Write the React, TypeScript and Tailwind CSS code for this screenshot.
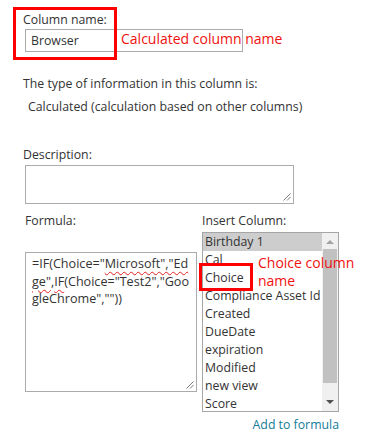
const columns = [
  'Birthday 1',
  'Cal',
  'Choice',
  'Compliance Asset Id',
  'Created',
  'DueDate',
  'expiration',
  'Modified',
  'new view',
  'Score',
];

function Grip() {
  return (
    <svg
      className="absolute right-[2px] bottom-[2px]"
      width="9"
      height="9"
      viewBox="0 0 9 9"
    >
      <path d="M8.5 1.5 L1.5 8.5 M8.5 5 L5 8.5" stroke="#7a7a7a" strokeWidth="1" />
    </svg>
  );
}

const squiggle =
  'underline decoration-wavy decoration-[#e02020] decoration-1 underline-offset-[3px]';

export default function App() {
  return (
    <div
      className="w-[372px] h-[439px] bg-white text-[#333] text-[12.3px] leading-[18px] pl-[23px] pt-[11px]"
      style={{ fontFamily: '"Open Sans", "Noto Sans", sans-serif' }}
    >
      {/* column name */}
      <div className="relative">
        <div>Column name:</div>
        <div className="ml-[2px] w-[218px] h-[23px] border border-[#ababab] pl-[5px] leading-[21px]">
          Browser
        </div>
        <div className="absolute left-[-10px] top-[-4px] w-[104px] h-[53px] border-[3px] border-[#ff0000]" />
        <div className="absolute left-[98px] top-[19px] text-[14px] text-[#f01010] leading-[18px]">
          Calculated column name
        </div>
      </div>

      <div className="mt-[23px]">The type of information in this column is:</div>
      <div className="mt-[5px] ml-[5px]">Calculated (calculation based on other columns)</div>

      {/* description */}
      <div className="mt-[30px]">Description:</div>
      <div className="relative mt-[1px] ml-[2px] w-[269px] h-[39px] border border-[#ababab]">
        <Grip />
      </div>

      {/* formula + insert column */}
      <div className="mt-[8px] ml-[2px] flex gap-[5px]">
        <div className="w-[172px]">
          <div>Formula:</div>
          <div className="relative mt-[22px] h-[140px] border border-[#ababab] pl-[6px] pt-[2px] leading-[17.5px] text-[12.6px]">
            <div>
              =IF(Choice="<span className={squiggle}>Microsoft","Ed</span>
            </div>
            <div>
              <span className={squiggle}>ge"</span>,<span className={squiggle}>IF</span>
              (Choice="Test2","Goo
            </div>
            <div>gleChrome",""))</div>
            <Grip />
          </div>
        </div>

        <div className="w-[137px]">
          <div>Insert Column:</div>
          <div className="relative mt-[2px] h-[180px] border border-[#a6a6a6] flex">
            <div className="flex-1">
              {columns.map((c, i) => (
                <div
                  key={c}
                  className={
                    'h-[18px] pl-[2px] whitespace-nowrap overflow-hidden ' +
                    (i === 0 ? 'bg-[#cdcdcd]' : '')
                  }
                >
                  {c}
                </div>
              ))}
            </div>
            <div className="w-[16px] bg-[#f0f0f0] flex flex-col items-center">
              <div className="h-[16px] flex items-center justify-center">
                <svg width="8" height="5" viewBox="0 0 8 5">
                  <path d="M0 5 L4 1 L8 5 Z" fill="#a3a3a3" />
                </svg>
              </div>
              <div className="w-[14px] h-[134px] bg-[#c1c1c1]" />
              <div className="flex-1 flex items-end justify-center pb-[6px]">
                <svg width="8" height="5" viewBox="0 0 8 5">
                  <path d="M0 0 L8 0 L4 4 Z" fill="#505050" />
                </svg>
              </div>
            </div>
            <div className="absolute left-[-4px] top-[30px] w-[54px] h-[28px] border-[3px] border-[#ff0000]" />
            <div className="absolute left-[55px] top-[21px] text-[14px] text-[#f01010] leading-[18px] w-[100px]">
              Choice column
              <br />
              name
            </div>
          </div>
          <div className="mt-[4px] text-right pr-[0px] text-[#137c98]">Add to formula</div>
        </div>
      </div>
    </div>
  );
}
